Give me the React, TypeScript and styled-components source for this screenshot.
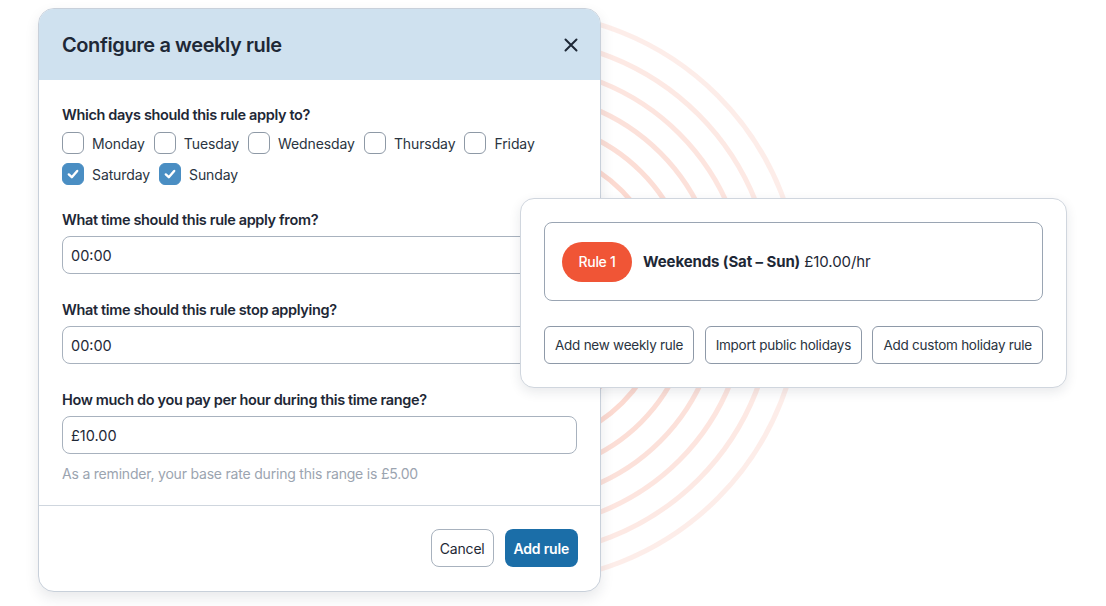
import React from 'react';
import { styled, createGlobalStyle } from 'styled-components';

const GlobalStyle = createGlobalStyle`
    * {
        box-sizing: border-box;
    }
    body {
        margin: 0;
        background: #ffffff;
        font-family: Inter, 'Noto Sans', sans-serif;
        color: #1e2836;
    }
`;

const DAYS = [
    { name: 'Monday', checked: false },
    { name: 'Tuesday', checked: false },
    { name: 'Wednesday', checked: false },
    { name: 'Thursday', checked: false },
    { name: 'Friday', checked: false },
    { name: 'Saturday', checked: true },
    { name: 'Sunday', checked: true },
];

const RING_RADII = [96, 123, 150, 177, 204, 231, 258, 285];

function Rings() {
    return (
        <RingsSvg width="1106" height="606" viewBox="0 0 1106 606">
            {RING_RADII.map((r, i) => (
                <circle
                    key={r}
                    cx="516"
                    cy="297"
                    r={r}
                    fill="none"
                    stroke="#f2714f"
                    strokeWidth="5"
                    strokeOpacity={0.32 - i * 0.028}
                />
            ))}
        </RingsSvg>
    );
}

function CloseIcon() {
    return (
        <svg width="14" height="14" viewBox="0 0 14 14">
            <path
                d="M1.5 1.5 L12.5 12.5 M12.5 1.5 L1.5 12.5"
                stroke="#1e2836"
                strokeWidth="2"
                strokeLinecap="round"
            />
        </svg>
    );
}

function CheckMark() {
    return (
        <svg width="14" height="14" viewBox="0 0 14 14">
            <path
                d="M2.8 7.4 L5.8 10.2 L11.2 4"
                fill="none"
                stroke="#ffffff"
                strokeWidth="2.4"
                strokeLinecap="round"
                strokeLinejoin="round"
            />
        </svg>
    );
}

export default function App() {
    return (
        <>
            <GlobalStyle />
            <Stage>
                <Rings />
                <Modal>
                    <ModalHeader>
                        <ModalTitle>Configure a weekly rule</ModalTitle>
                        <CloseButton aria-label="Close">
                            <CloseIcon />
                        </CloseButton>
                    </ModalHeader>
                    <ModalBody>
                        <Field>
                            <Label>Which days should this rule apply to?</Label>
                            <DayList>
                                {DAYS.map((day) => (
                                    <DayOption key={day.name}>
                                        <CheckBox $checked={day.checked}>
                                            {day.checked && <CheckMark />}
                                        </CheckBox>
                                        {day.name}
                                    </DayOption>
                                ))}
                            </DayList>
                        </Field>
                        <Field>
                            <Label>What time should this rule apply from?</Label>
                            <Input>00:00</Input>
                        </Field>
                        <Field>
                            <Label>What time should this rule stop applying?</Label>
                            <Input>00:00</Input>
                        </Field>
                        <Field>
                            <Label>How much do you pay per hour during this time range?</Label>
                            <Input>£10.00</Input>
                            <Hint>As a reminder, your base rate during this range is £5.00</Hint>
                        </Field>
                    </ModalBody>
                    <ModalFooter>
                        <SecondaryButton>Cancel</SecondaryButton>
                        <PrimaryButton>Add rule</PrimaryButton>
                    </ModalFooter>
                </Modal>
                <RuleCard>
                    <RuleSummary>
                        <RuleBadge>Rule 1</RuleBadge>
                        <RuleText>
                            <strong>Weekends (Sat – Sun)</strong> £10.00/hr
                        </RuleText>
                    </RuleSummary>
                    <RuleActions>
                        <OutlineButton>Add new weekly rule</OutlineButton>
                        <OutlineButton>Import public holidays</OutlineButton>
                        <OutlineButton>Add custom holiday rule</OutlineButton>
                    </RuleActions>
                </RuleCard>
            </Stage>
        </>
    );
}

const Stage = styled.div`
    position: relative;
    width: 1106px;
    height: 606px;
    padding: 8px 0 0 38px;
    overflow: hidden;
`;

const RingsSvg = styled.svg`
    position: absolute;
    inset: 0;
`;

const Modal = styled.div`
    position: relative;
    width: 563px;
    border: 1px solid #c8d0da;
    border-radius: 16px;
    background: #ffffff;
    overflow: hidden;
    box-shadow: 0 6px 14px rgba(30, 40, 54, 0.1);
`;

const ModalHeader = styled.div`
    display: flex;
    align-items: center;
    justify-content: space-between;
    height: 71px;
    padding: 0 23px;
    background: #cfe1ef;
`;

const ModalTitle = styled.h2`
    margin: 0;
    font-size: 20px;
    font-weight: 600;
    letter-spacing: -0.4px;
    color: #1e2836;
`;

const CloseButton = styled.button`
    display: flex;
    align-items: center;
    justify-content: center;
    width: 14px;
    height: 14px;
    margin-right: -1px;
    padding: 0;
    border: none;
    background: none;
`;

const ModalBody = styled.div`
    display: flex;
    flex-direction: column;
    gap: 26px;
    padding: 25px 23px 21px;
`;

const Field = styled.div`
    display: flex;
    flex-direction: column;
`;

const Label = styled.div`
    margin-bottom: 6px;
    font-size: 14.5px;
    line-height: 20px;
    font-weight: 600;
    letter-spacing: -0.35px;
    color: #1e2836;
`;

const DayList = styled.div`
    display: flex;
    flex-wrap: wrap;
    column-gap: 9px;
    row-gap: 9px;
    margin: 1px 0 -1px;
`;

const DayOption = styled.label`
    display: flex;
    align-items: center;
    gap: 8px;
    height: 22px;
    font-size: 14px;
    letter-spacing: -0.1px;
    color: #2a3441;
`;

const CheckBox = styled.span<{ $checked: boolean }>`
    display: flex;
    align-items: center;
    justify-content: center;
    width: 22px;
    height: 22px;
    border-radius: 6px;
    border: 1px solid ${(p) => (p.$checked ? '#4a8ec3' : '#8e99a6')};
    background: ${(p) => (p.$checked ? '#4a8ec3' : '#ffffff')};
`;

const Input = styled.div`
    display: flex;
    align-items: center;
    height: 38px;
    padding: 0 8px;
    border: 1px solid #a8b2be;
    border-radius: 8px;
    font-size: 14.5px;
    color: #1e2836;
`;

const Hint = styled.div`
    margin-top: 10px;
    font-size: 14px;
    line-height: 20px;
    letter-spacing: -0.2px;
    color: #9ba4b0;
`;

const ModalFooter = styled.div`
    display: flex;
    justify-content: flex-end;
    gap: 11px;
    padding: 23px 22px 24px;
    border-top: 1px solid #cfd6de;
`;

const SecondaryButton = styled.button`
    height: 38px;
    padding: 0 8px;
    border: 1px solid #a8b2be;
    border-radius: 8px;
    background: #ffffff;
    font-family: inherit;
    font-size: 14px;
    letter-spacing: -0.2px;
    color: #1e2836;
`;

const PrimaryButton = styled.button`
    height: 38px;
    padding: 0 9px;
    border: none;
    border-radius: 8px;
    background: #1b6ea8;
    font-family: inherit;
    font-size: 14px;
    font-weight: 600;
    letter-spacing: -0.2px;
    color: #ffffff;
`;

const RuleCard = styled.div`
    position: absolute;
    left: 520px;
    top: 198px;
    width: 547px;
    padding: 23px;
    border: 1px solid #d0d6de;
    border-radius: 14px;
    background: #ffffff;
    box-shadow: 0 4px 12px rgba(30, 40, 54, 0.1);
`;

const RuleSummary = styled.div`
    display: flex;
    align-items: center;
    gap: 11px;
    height: 79px;
    padding: 0 17px;
    border: 1px solid #9aa5b3;
    border-radius: 8px;
`;

const RuleBadge = styled.span`
    display: flex;
    align-items: center;
    justify-content: center;
    width: 70px;
    height: 40px;
    border-radius: 20px;
    background: #f05536;
    font-size: 14px;
    font-weight: 500;
    letter-spacing: -0.3px;
    color: #ffffff;
`;

const RuleText = styled.span`
    font-size: 15px;
    letter-spacing: -0.1px;
    color: #1e2836;

    strong {
        font-weight: 700;
    }
`;

const RuleActions = styled.div`
    display: flex;
    justify-content: space-between;
    margin-top: 25px;
`;

const OutlineButton = styled.button`
    height: 38px;
    padding: 0 10px;
    border: 1px solid #8e99a8;
    border-radius: 6px;
    background: #ffffff;
    font-family: inherit;
    font-size: 13.5px;
    letter-spacing: -0.25px;
    color: #2a3441;
`;
